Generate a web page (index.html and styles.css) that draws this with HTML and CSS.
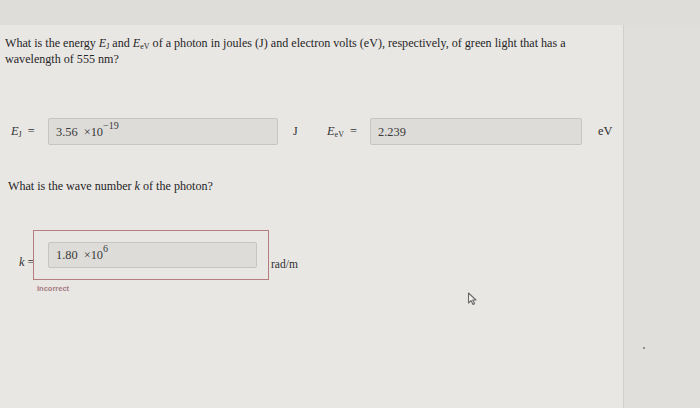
FILE: index.html
```html
<!DOCTYPE html>
<html>
<head>
<meta charset="utf-8">
<link rel="stylesheet" href="styles.css">
</head>
<body>
<div class="top"></div>
<div class="main">
  <div class="panel">
    <p class="q">What is the energy <i>E</i><sub class="s">J</sub> and <i>E</i><sub class="s">eV</sub> of a photon in joules (J) and electron volts (eV), respectively, of green light that has a<br>wavelength of 555 nm?</p>
    <div class="row1">
      <span class="lbl lbl-j"><i>E</i><sub class="s">J</sub><span class="eq">=</span></span>
      <div class="inp inp-j"><span>3.56</span><span class="times">×10<sup>−19</sup></span></div>
      <span class="unit unit-j">J</span>
      <span class="lbl lbl-ev"><i>E</i><sub class="s">eV</sub><span class="eq">=</span></span>
      <div class="inp inp-ev"><span>2.239</span></div>
      <span class="unit unit-ev">eV</span>
    </div>
    <p class="q q2">What is the wave number <i>k</i> of the photon?</p>
    <div class="row2">
      <span class="lbl lbl-k"><i>k</i> =</span>
      <div class="wrong">
        <div class="inp inp-k"><span>1.80</span><span class="times">×10<sup>6</sup></span></div>
      </div>
      <span class="unit unit-k">rad/m</span>
    </div>
    <div class="msg">Incorrect</div>
    <div class="cursor-row">
      <svg class="cursor" width="12" height="14" viewBox="0 0 12 14"><path d="M1.5 1 L1.5 11 L4 8.6 L6 12.5 L7.6 11.7 L5.7 8 L9 8 Z" fill="#f2f1ef" stroke="#6a6a6a" stroke-width="1.1" stroke-linejoin="round"/></svg>
    </div>
  </div>
  <div class="side"><span class="dot"></span></div>
</div>
</body>
</html>
```
FILE: styles.css
```css
html, body {
  margin: 0;
  padding: 0;
}
body {
  width: 700px;
  height: 408px;
  overflow: hidden;
  background: #e0dedb;
  font-family: "Liberation Serif", "Times New Roman", serif;
  color: #2e2e2e;
}
.top {
  height: 25px;
  background: #dfddda;
}
.main {
  display: flex;
  height: 383px;
}
.panel {
  width: 624px;
  border-right: 1px solid #d2d0cd;
  background: #e9e7e4;
  padding: 10px 0 0 5px;
  box-sizing: border-box;
}
.side {
  flex: 1;
  background: #e1dfdc;
  position: relative;
}
.dot {
  position: absolute;
  left: 19px;
  top: 322px;
  width: 2px;
  height: 2px;
  border-radius: 50%;
  background: #777;
}
.q {
  margin: 0;
  font-size: 12.1px;
  line-height: 16px;
  color: #262626;
}
.s {
  font-size: 8px;
  vertical-align: -2px;
  line-height: 0;
}
.row1 {
  display: flex;
  align-items: center;
  height: 27px;
  margin-top: 51px;
  padding-left: 6px;
  font-size: 12.4px;
}
.lbl {
  color: #333;
}
.eq {
  margin-left: 6px;
}
.lbl-j {
  width: 37px;
}
.lbl-ev {
  width: 43px;
}
.inp {
  box-sizing: border-box;
  height: 27px;
  background: #dddcd9;
  border: 1px solid #c6c5c1;
  border-radius: 2px;
  display: flex;
  align-items: center;
  padding: 1px 0 0 7px;
  font-size: 12.4px;
  color: #3a3a3a;
}
.inp-j {
  width: 230px;
}
.inp-ev {
  width: 212px;
}
.times {
  margin-left: 6px;
}
.times sup {
  font-size: 10px;
  vertical-align: 7px;
  line-height: 0;
}
.unit-j {
  margin-left: 15px;
  width: 34px;
  font-size: 12px;
}
.unit-ev {
  margin-left: 16px;
}
.q2 {
  margin-top: 33px;
  padding-left: 3px;
}
.row2 {
  display: flex;
  align-items: flex-end;
  margin-top: 36px;
  padding-left: 14px;
  font-size: 12.4px;
}
.lbl-k {
  padding-bottom: 10px;
  width: 14px;
  white-space: nowrap;
}
.wrong {
  box-sizing: border-box;
  width: 236px;
  height: 50px;
  border: 1.5px solid #b47e7f;
  padding: 11px 0 0 14px;
}
.inp-k {
  width: 209px;
  height: 26px;
}
.unit-k {
  padding-bottom: 10px;
  margin-left: 2px;
  font-size: 11.5px;
}
.msg {
  margin: 4px 0 0 32px;
  font-family: "Liberation Sans", sans-serif;
  font-size: 7.5px;
  font-weight: bold;
  color: #a57a82;
}
.cursor-row {
  padding: 0 0 0 462px;
  margin-top: -1px;
}
.cursor {
  display: block;
}
```
